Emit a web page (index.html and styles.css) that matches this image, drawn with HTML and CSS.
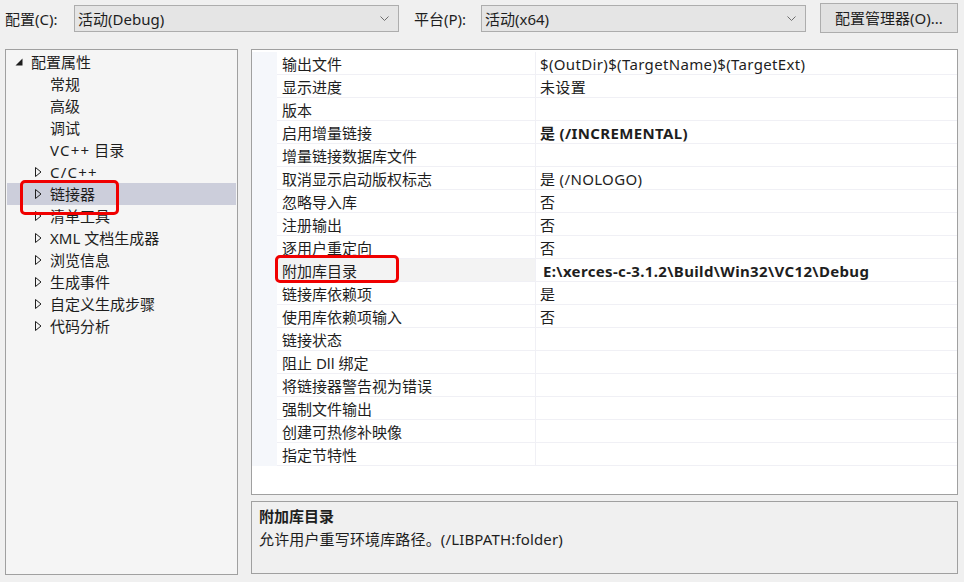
FILE: index.html
```html
<!DOCTYPE html>
<html lang="zh-CN">
<head>
    <meta charset="UTF-8">
    <title>属性页</title>
    <link rel="stylesheet" href="styles.css">
</head>
<body>
    <div class="toolbar">
        <span class="label label-config">配置(C):</span>
        <div class="combo">
            <span>活动(Debug)</span>
            <svg class="chevron" width="9" height="5" viewBox="0 0 9 5"><polyline points="0.5,0.5 4.5,4.5 8.5,0.5" fill="none" stroke="#6d6d6d" stroke-width="1"/></svg>
        </div>
        <span class="label label-platform">平台(P):</span>
        <div class="combo">
            <span>活动(x64)</span>
            <svg class="chevron" width="9" height="5" viewBox="0 0 9 5"><polyline points="0.5,0.5 4.5,4.5 8.5,0.5" fill="none" stroke="#6d6d6d" stroke-width="1"/></svg>
        </div>
        <button class="manager">配置管理器(O)...</button>
    </div>

    <div class="main">
        <div class="tree">
            <div class="node root">
                <svg class="expanded" width="8" height="8" viewBox="0 0 8 8"><polygon points="7.5,0.5 7.5,7.5 0.5,7.5" fill="#1e1e1e"/></svg>
                <span>配置属性</span>
            </div>
            <div class="node leaf">常规</div>
            <div class="node leaf">高级</div>
            <div class="node leaf">调试</div>
            <div class="node leaf"><span class="wide">VC++</span>&nbsp;目录</div>
            <div class="node branch"><svg class="collapsed" width="7" height="10" viewBox="0 0 7 10"><polygon points="0.5,0.5 6,5 0.5,9.5" fill="none" stroke="#1e1e1e"/></svg><span class="wide">C/C++</span></div>
            <div class="node branch selected"><svg class="collapsed" width="7" height="10" viewBox="0 0 7 10"><polygon points="0.5,0.5 6,5 0.5,9.5" fill="none" stroke="#1e1e1e"/></svg><span>链接器</span></div>
            <div class="node branch"><svg class="collapsed" width="7" height="10" viewBox="0 0 7 10"><polygon points="0.5,0.5 6,5 0.5,9.5" fill="none" stroke="#1e1e1e"/></svg><span>清单工具</span></div>
            <div class="node branch"><svg class="collapsed" width="7" height="10" viewBox="0 0 7 10"><polygon points="0.5,0.5 6,5 0.5,9.5" fill="none" stroke="#1e1e1e"/></svg><span>XML 文档生成器</span></div>
            <div class="node branch"><svg class="collapsed" width="7" height="10" viewBox="0 0 7 10"><polygon points="0.5,0.5 6,5 0.5,9.5" fill="none" stroke="#1e1e1e"/></svg><span>浏览信息</span></div>
            <div class="node branch"><svg class="collapsed" width="7" height="10" viewBox="0 0 7 10"><polygon points="0.5,0.5 6,5 0.5,9.5" fill="none" stroke="#1e1e1e"/></svg><span>生成事件</span></div>
            <div class="node branch"><svg class="collapsed" width="7" height="10" viewBox="0 0 7 10"><polygon points="0.5,0.5 6,5 0.5,9.5" fill="none" stroke="#1e1e1e"/></svg><span>自定义生成步骤</span></div>
            <div class="node branch"><svg class="collapsed" width="7" height="10" viewBox="0 0 7 10"><polygon points="0.5,0.5 6,5 0.5,9.5" fill="none" stroke="#1e1e1e"/></svg><span>代码分析</span></div>
            <div class="mark mark-linker"></div>
        </div>

        <div class="right">
            <div class="grid" id="grid">
                <div class="mark mark-libdir"></div>
            </div>
            <div class="desc">
                <div class="desc-title">附加库目录</div>
                <div class="desc-text">允许用户重写环境库路径。(/LIBPATH:folder)</div>
            </div>
        </div>
    </div>

    <script>
        const props = [
            ["输出文件", "$(OutDir)$(TargetName)$(TargetExt)"],
            ["显示进度", "未设置"],
            ["版本", ""],
            ["启用增量链接", "是 (/INCREMENTAL)", "bold"],
            ["增量链接数据库文件", ""],
            ["取消显示启动版权标志", "是 (/NOLOGO)"],
            ["忽略导入库", "否"],
            ["注册输出", "否"],
            ["逐用户重定向", "否"],
            ["附加库目录", "E:\\xerces-c-3.1.2\\Build\\Win32\\VC12\\Debug", "bold path", "current"],
            ["链接库依赖项", "是"],
            ["使用库依赖项输入", "否"],
            ["链接状态", ""],
            ["阻止 Dll 绑定", ""],
            ["将链接器警告视为错误", ""],
            ["强制文件输出", ""],
            ["创建可热修补映像", ""],
            ["指定节特性", ""]
        ];

        const grid = document.getElementById("grid");
        props.forEach(function (p) {
            const row = document.createElement("div");
            row.className = "row" + (p[3] ? " " + p[3] : "");
            row.innerHTML =
                '<div class="gutter"></div>' +
                '<div class="name">' + p[0] + '</div>' +
                '<div class="value ' + (p[2] || "") + '"></div>';
            row.querySelector(".value").textContent = p[1];
            grid.insertBefore(row, grid.lastElementChild);
        });
    </script>
</body>
</html>
```

FILE: styles.css
```css
body {
    margin: 0;
    width: 964px;
    height: 582px;
    background-color: #f0f0f0;
    font-family: "Noto Sans", "Noto Sans CJK SC", sans-serif;
    font-size: 15px;
    color: #1e1e1e;
    overflow: hidden;
}

/* top bar with the two combos */
.toolbar {
    display: flex;
    align-items: center;
    height: 37px;
    padding-left: 5px;
    box-sizing: border-box;
}

.label {
    line-height: 20px;
}

.label-config {
    width: 69px;
}

.label-platform {
    width: 67px;
    margin-left: 15px;
}

.combo {
    display: flex;
    align-items: center;
    justify-content: space-between;
    width: 325px;
    height: 27px;
    box-sizing: border-box;
    border: 1px solid #adadad;
    background-color: #e5e5e5;
    padding: 0 9px 0 3px;
    align-self: flex-start;
    margin-top: 5px;
    line-height: 20px;
}

.manager {
    width: 138px;
    height: 30px;
    margin-left: 14px;
    align-self: flex-start;
    margin-top: 3px;
    border: 1px solid #adadad;
    background-color: #e1e1e1;
    font-family: inherit;
    font-size: 15px;
    line-height: 20px;
    color: #1e1e1e;
    padding: 0;
}

.main {
    display: flex;
    padding: 12px 6px 0 5px;
    height: 526px;
}

/* left tree */
.tree {
    position: relative;
    width: 233px;
    box-sizing: border-box;
    border: 1px solid #a0a0a0;
    background-color: #f5f5f5;
    padding: 1px 1px 0 1px;
}

.node {
    display: flex;
    align-items: center;
    height: 22px;
    line-height: 22px;
    white-space: nowrap;
}

.wide {
    letter-spacing: 1.2px;
}

.root {
    padding-left: 8px;
}

.root .expanded {
    margin-right: 8px;
}

.leaf {
    padding-left: 43px;
}

.branch {
    padding-left: 28px;
}

.branch .collapsed {
    margin-right: 8px;
}

.selected {
    background-color: #cccedb;
}

.mark {
    position: absolute;
    border: 3px solid #f00000;
    border-radius: 5px;
    box-sizing: border-box;
}

.mark-linker {
    left: 14px;
    top: 130px;
    width: 99px;
    height: 35px;
}

/* right side */
.right {
    display: flex;
    flex-direction: column;
    margin-left: 13px;
    width: 707px;
}

.grid {
    position: relative;
    height: 446px;
    box-sizing: border-box;
    border: 1px solid #a0a0a0;
    background-color: #ffffff;
    padding-top: 2px;
}

.row {
    display: flex;
    height: 23px;
    line-height: 24px;
    white-space: nowrap;
}

.gutter {
    width: 25px;
    background-color: #f5f7fb;
}

.name {
    width: 253px;
    padding-left: 5px;
    border-bottom: 1px solid #f0f0f5;
    border-right: 1px solid #f0f0f5;
}

.value {
    flex: 1;
    padding-left: 4px;
    letter-spacing: 0.35px;
    border-bottom: 1px solid #f0f0f5;
}

.value.bold {
    font-weight: bold;
}

.value.path {
    padding-left: 7px;
}

.current .name {
    background-color: #f3f3f3;
}

.mark-libdir {
    left: 23px;
    top: 205px;
    width: 124px;
    height: 28px;
}

.desc {
    margin-top: 6px;
    height: 73px;
    box-sizing: border-box;
    border: 1px solid #a0a0a0;
    background-color: #f0f0f0;
    padding: 3px 7px;
}

.desc-title {
    font-weight: bold;
    line-height: 22px;
}

.desc-text {
    line-height: 24px;
    letter-spacing: 0.15px;
}
```
